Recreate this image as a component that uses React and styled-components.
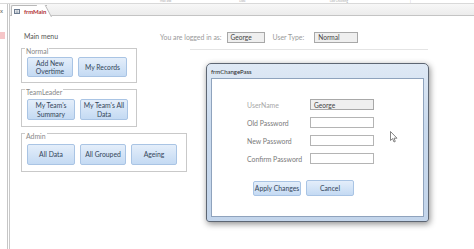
import React from "react";
import styled, { createGlobalStyle } from "styled-components";

const Global = createGlobalStyle`
  html, body { margin: 0; padding: 0; background: #fff; }
  body { font-family: "Lato", "Open Sans", sans-serif; }
`;

const Screen = styled.div`
  position: relative;
  width: 474px;
  height: 249px;
  overflow: hidden;
  background: #fff;
  display: flex;
  flex-direction: column;
  font-size: 6.9px;
  color: #555;
`;

const TopStrip = styled.div`
  height: 4px;
  overflow: hidden;
  display: flex;
  align-items: flex-start;
  border-bottom: 1px solid #d9d9d9;
  box-sizing: border-box;
`;

const TinyText = styled.span`
  margin-left: ${(p) => p.$left}px;
  font-size: 3px;
  line-height: 3px;
  color: #a5a5a5;
  white-space: nowrap;
`;

const Body = styled.div`
  flex: 1;
  display: flex;
`;

const NavStrip = styled.div`
  width: 7px;
  border-right: 1px solid #c6c6c6;
  display: flex;
  flex-direction: column;
`;

const NavX = styled.div`
  margin-top: 3px;
  font-size: 6px;
  color: #666;
  line-height: 8px;
`;

const NavPink = styled.div`
  margin-top: 17px;
  width: 5px;
  height: 7px;
  background: #f6c6c8;
`;

const Doc = styled.div`
  flex: 1;
  margin-left: 1px;
  border-left: 1px solid #c9c9c9;
  display: flex;
  flex-direction: column;
`;

const TabBar = styled.div`
  height: 11px;
  background: linear-gradient(#f7f7f7, #ececec);
  border-bottom: 1px solid #c4c4c4;
  display: flex;
  align-items: flex-end;
  padding-left: 1px;
`;

const Tab = styled.div`
  position: relative;
  height: 11px;
  width: 36px;
  margin-bottom: -1px;
  background: #fff;
  border: 1px solid #b8b8b8;
  border-bottom: none;
  border-right: none;
  border-radius: 2px 0 0 0;
  display: flex;
  align-items: center;
  gap: 4px;
  padding-left: 2px;
  box-sizing: border-box;
  &::after {
    content: "";
    position: absolute;
    right: -5px;
    top: -1px;
    width: 8px;
    height: 12px;
    background: #fff;
    border-right: 1px solid #b8b8b8;
    transform: skewX(28deg);
    transform-origin: bottom left;
  }
`;

const TabText = styled.span`
  position: relative;
  z-index: 1;
  color: #b0343a;
  font-size: 6px;
  font-weight: 700;
  letter-spacing: -0.1px;
`;

const Form = styled.div`
  position: relative;
  flex: 1;
  padding: 14px 0 0 11px;
  display: flex;
  flex-direction: column;
`;

const HeaderRow = styled.div`
  display: flex;
  align-items: center;
  height: 14px;
`;

const MainMenu = styled.div`
  width: 136px;
  padding-left: 3px;
  color: #555;
  margin-top: -3px;
`;

const InfoLabel = styled.span`
  color: #9a9a9a;
  margin-right: ${(p) => p.$gap}px;
`;

const Field = styled.div`
  width: ${(p) => p.$w}px;
  height: ${(p) => p.$h || 11}px;
  box-sizing: border-box;
  border: 1px solid ${(p) => (p.$filled ? "#a8a8a8" : "#b4b4b4")};
  background: ${(p) => (p.$filled ? "#efefef" : "#fff")};
  color: #444;
  font-size: 6.6px;
  display: flex;
  align-items: center;
  padding-left: 3px;
  margin-right: ${(p) => p.$mr || 0}px;
`;

const Groups = styled.div`
  margin-top: 4px;
  display: flex;
  flex-direction: column;
  gap: ${(p) => p.$gap}px;
`;

const Group = styled.div`
  position: relative;
  width: ${(p) => p.$w}px;
  height: ${(p) => p.$h}px;
  box-sizing: border-box;
  border: 1px solid #c9c9c9;
  padding: ${(p) => p.$pt}px 0 0 5px;
  display: flex;
  gap: 5px;
`;

const Legend = styled.span`
  position: absolute;
  left: 3px;
  top: -2px;
  padding: 0 1px;
  background: #fff;
  color: #888;
  line-height: 8px;
`;

const Btn = styled.div`
  width: ${(p) => p.$w}px;
  height: ${(p) => p.$h || 21}px;
  box-sizing: border-box;
  border: 1px solid #a9c4e4;
  border-radius: 2px;
  background: linear-gradient(#e4eefa, #c4daf3);
  color: #34465a;
  display: flex;
  align-items: center;
  justify-content: center;
  text-align: center;
  line-height: 8.5px;
  font-size: 6.8px;
  white-space: nowrap;
  margin-top: ${(p) => p.$mt || 0}px;
`;

const Rule = styled.div`
  position: absolute;
  left: 180px;
  top: 33px;
  width: 238px;
  height: 1px;
  background: #e4e4e4;
`;

const Dialog = styled.div`
  position: absolute;
  left: 206px;
  top: 63px;
  width: 223px;
  height: 159px;
  box-sizing: border-box;
  border: 1px solid #5d6673;
  border-radius: 5px 5px 3px 3px;
  background: linear-gradient(#dfe9f5, #c9daee 40%, #c3d5eb);
  box-shadow: 1px 2px 6px rgba(0, 0, 0, 0.45);
  display: flex;
  flex-direction: column;
  padding: 0 4px 4px 4px;
`;

const DlgTitle = styled.div`
  height: 14px;
  display: flex;
  align-items: center;
  color: #1e1e1e;
  font-size: 6px;
`;

const DlgBody = styled.div`
  flex: 1;
  background: #fff;
  border: 1px solid #8fa3bd;
  display: flex;
  flex-direction: column;
  padding: 20px 0 0 35px;
`;

const FieldGrid = styled.div`
  display: grid;
  grid-template-columns: 63px 64px;
  row-gap: 7px;
  align-items: center;
`;

const DlgLabel = styled.span`
  color: ${(p) => (p.$disabled ? "#a8a8a8" : "#7a7a7a")};
`;

const DlgButtons = styled.div`
  margin-top: 16px;
  margin-left: 6px;
  display: flex;
  gap: 5px;
  align-items: flex-start;
`;

const Cursor = styled.svg`
  position: absolute;
  left: 390px;
  top: 131px;
`;

function TabIcon() {
  return (
    <svg width="6" height="5" viewBox="0 0 6 5" style={{ position: "relative", zIndex: 1 }}>
      <rect x="0.5" y="0.5" width="5" height="4" fill="#fff" stroke="#6c7c91" />
      <line x1="1.5" y1="2" x2="4.5" y2="2" stroke="#6c7c91" strokeWidth="0.7" />
      <line x1="1.5" y1="3.3" x2="4.5" y2="3.3" stroke="#6c7c91" strokeWidth="0.7" />
    </svg>
  );
}

export default function App() {
  return (
    <>
      <Global />
      <Screen>
        <TopStrip>
          <TinyText $left={160}>Mail and</TinyText>
          <TinyText $left={68}>Date</TinyText>
          <TinyText $left={84}>Last Checking</TinyText>
          <TinyText $left={62}>|</TinyText>
        </TopStrip>
        <Body>
          <NavStrip>
            <NavX>x</NavX>
            <NavPink />
          </NavStrip>
          <Doc>
            <TabBar>
              <Tab>
                <TabIcon />
                <TabText>frmMain</TabText>
              </Tab>
            </TabBar>
            <Form>
              <Rule />
              <HeaderRow>
                <MainMenu>Main menu</MainMenu>
                <InfoLabel $gap={5}>You are logged in as:</InfoLabel>
                <Field $w={38} $filled $mr={8}>George</Field>
                <InfoLabel $gap={10}>User Type:</InfoLabel>
                <Field $w={44} $filled>Normal</Field>
              </HeaderRow>
              <Groups $gap={6}>
                <Group $w={116} $h={35} $pt={8}>
                  <Legend>Normal</Legend>
                  <Btn $w={46} $h={20}>Add New<br />Overtime</Btn>
                  <Btn $w={49} $h={20}>My Records</Btn>
                </Group>
                <Group $w={116} $h={38} $pt={9}>
                  <Legend>TeamLeader</Legend>
                  <Btn $w={48} $h={21}>My Team's<br />Summary</Btn>
                  <Btn $w={48} $h={21}>My Team's All<br />Data</Btn>
                </Group>
                <Group $w={166} $h={39} $pt={10}>
                  <Legend>Admin</Legend>
                  <Btn $w={48} $h={21}>All Data</Btn>
                  <Btn $w={46} $h={21}>All Grouped</Btn>
                  <Btn $w={46} $h={21}>Ageing</Btn>
                </Group>
              </Groups>
            </Form>
          </Doc>
        </Body>
        <Dialog>
          <DlgTitle>frmChangePass</DlgTitle>
          <DlgBody>
            <FieldGrid>
              <DlgLabel $disabled>UserName</DlgLabel>
              <Field $w={64} $h={11} $filled>George</Field>
              <DlgLabel>Old Password</DlgLabel>
              <Field $w={64} $h={11} />
              <DlgLabel>New Password</DlgLabel>
              <Field $w={64} $h={11} />
              <DlgLabel>Confirm Password</DlgLabel>
              <Field $w={64} $h={11} />
            </FieldGrid>
            <DlgButtons>
              <Btn $w={48} $h={15} $mt={1}>Apply Changes</Btn>
              <Btn $w={48} $h={16}>Cancel</Btn>
            </DlgButtons>
          </DlgBody>
        </Dialog>
        <Cursor width="8" height="12" viewBox="0 0 8 12">
          <path d="M0.5 0.5 L0.5 9.5 L2.6 7.6 L4 11 L5.3 10.4 L4 7.2 L7 7.2 Z" fill="#fff" stroke="#666" strokeWidth="0.8" strokeLinejoin="round" />
        </Cursor>
      </Screen>
    </>
  );
}
